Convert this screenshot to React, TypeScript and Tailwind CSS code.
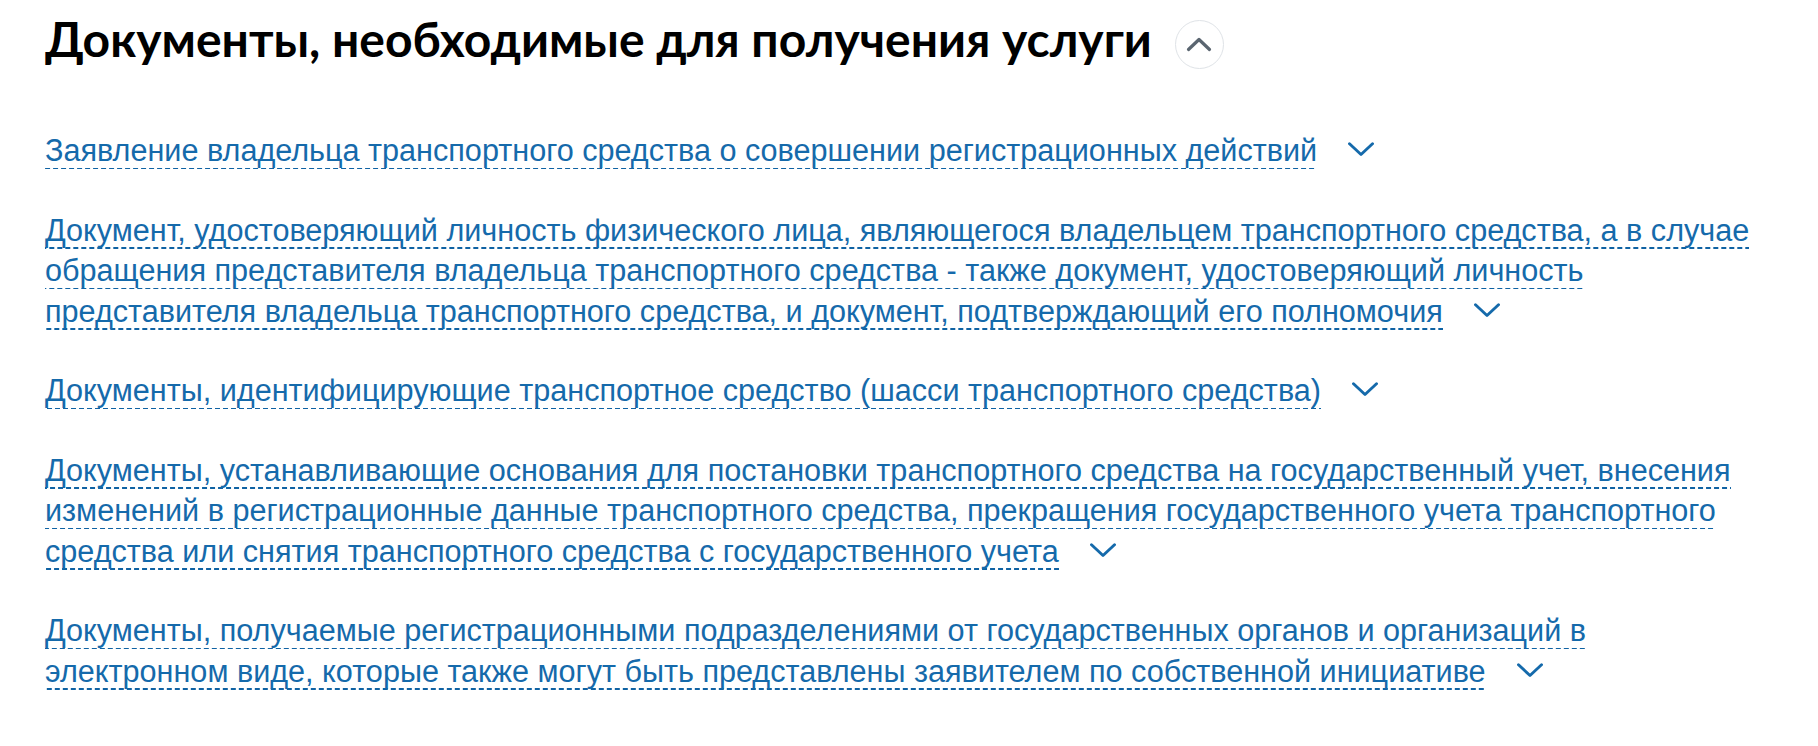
import React from "react";

const Down = () => (
  <svg width="26" height="15" viewBox="0 0 26 15" className="inline-block align-middle ml-[31px] relative top-[-3px]" fill="none">
    <path d="M1.5 1.8 L13 12.5 L24.5 1.8" stroke="#156aab" strokeWidth="2.9" strokeLinecap="round" strokeLinejoin="round" />
  </svg>
);

const Link = ({ lines }: { lines: string[] }) => (
  <p className="text-[30.6px] leading-[40.5px] text-[#156aab] whitespace-nowrap" style={{ fontFamily: '"Liberation Sans", Arial, sans-serif' }}>
    <span className="bg-[linear-gradient(to_right,#0f62a3_62%,transparent_62%)] bg-[length:8px_1.5px] bg-repeat-x bg-bottom pb-[2px]">
      {lines.map((l, i) => (
        <React.Fragment key={i}>
          {l}
          {i < lines.length - 1 && <br />}
        </React.Fragment>
      ))}
    </span>
    <Down />
  </p>
);

export default function App() {
  const items = [
    ["Заявление владельца транспортного средства о совершении регистрационных действий"],
    [
      "Документ, удостоверяющий личность физического лица, являющегося владельцем транспортного средства, а в случае",
      "обращения представителя владельца транспортного средства - также документ, удостоверяющий личность",
      "представителя владельца транспортного средства, и документ, подтверждающий его полномочия",
    ],
    ["Документы, идентифицирующие транспортное средство (шасси транспортного средства)"],
    [
      "Документы, устанавливающие основания для постановки транспортного средства на государственный учет, внесения",
      "изменений в регистрационные данные транспортного средства, прекращения государственного учета транспортного",
      "средства или снятия транспортного средства с государственного учета",
    ],
    [
      "Документы, получаемые регистрационными подразделениями от государственных органов и организаций в",
      "электронном виде, которые также могут быть представлены заявителем по собственной инициативе",
    ],
  ];
  return (
    <div className="bg-white min-h-[746px] w-full pl-[45px] pt-[10px] overflow-hidden">
      <div className="flex items-start gap-[23px]">
        <h2
          className="text-[48px] leading-[57.6px] font-bold text-black"
          style={{ fontFamily: 'Lato, "Open Sans", sans-serif' }}
        >
          Документы, необходимые для получения услуги
        </h2>
        <button className="mt-[10px] w-[49px] h-[49px] rounded-full border-[1.5px] border-[#dfe3e7] bg-white flex items-center justify-center">
          <svg width="26" height="15" viewBox="0 0 26 15" fill="none">
            <path d="M2.5 12.5 L13 2.5 L23.5 12.5" stroke="#5a6570" strokeWidth="3.2" strokeLinecap="round" strokeLinejoin="round" />
          </svg>
        </button>
      </div>
      <div className="mt-[61px] flex flex-col gap-[39px]">
        {items.map((l, i) => (
          <Link key={i} lines={l} />
        ))}
      </div>
    </div>
  );
}
